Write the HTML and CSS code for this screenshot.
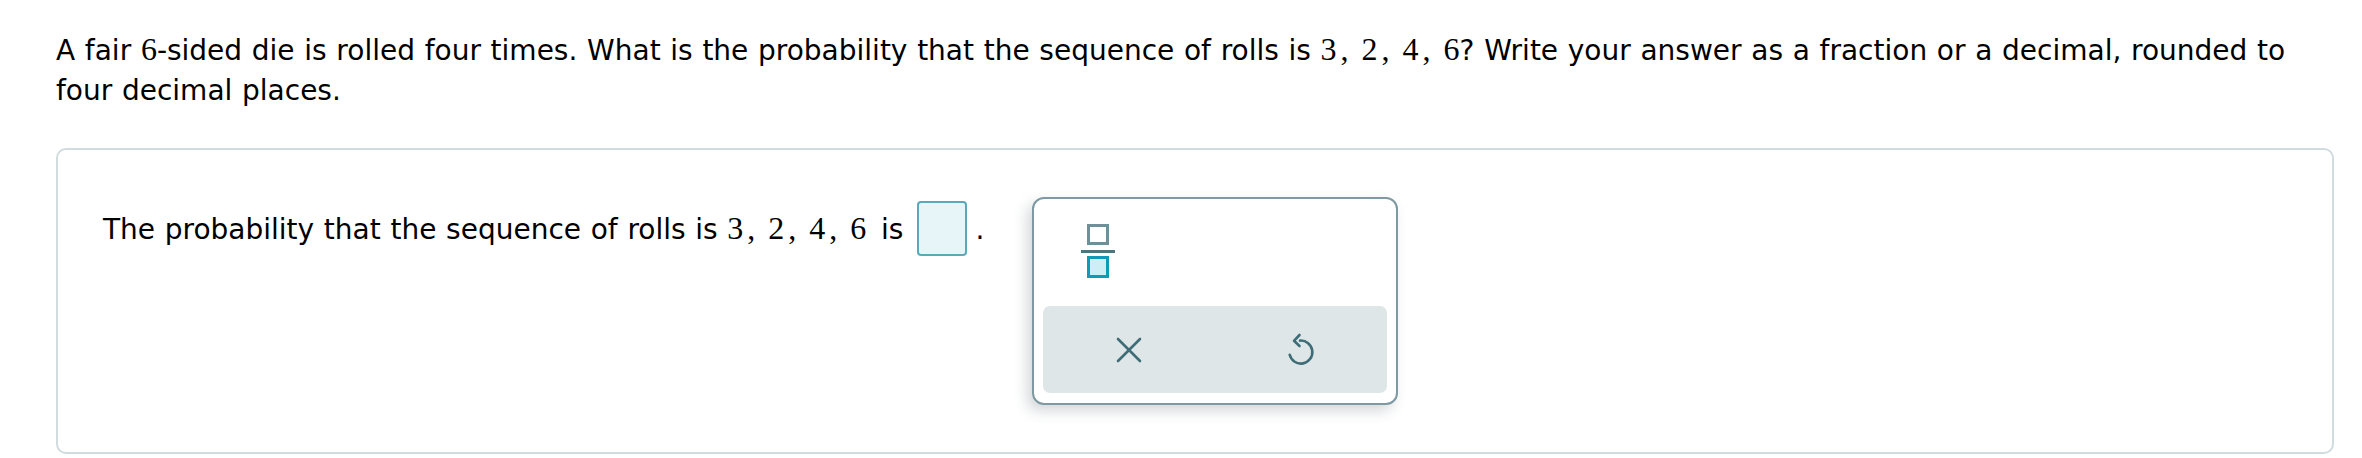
FILE: index.html
```html
<!DOCTYPE html>
<html lang="en">
<head>
<meta charset="utf-8">
<title>Probability question</title>
<link rel="stylesheet" href="styles.css">
</head>
<body>
<div class="page">
  <p class="question">A fair <span class="m">6</span>-sided die is rolled four times. What is the probability that the sequence of rolls is <span class="m seq"><span>3</span><span class="cm">,</span><span>2</span><span class="cm">,</span><span>4</span><span class="cm">,</span><span>6</span></span>? Write your answer as a fraction or a decimal, rounded to four decimal places.</p>
  <div class="card">
    <div class="statement">
      <span class="stext">The probability that the sequence of rolls is <span class="m seq inline-seq"><span>3</span><span class="cm">,</span><span>2</span><span class="cm">,</span><span>4</span><span class="cm">,</span><span>6</span></span> is</span>
      <span class="answer-box"></span>
      <span class="period">.</span>
    </div>
    <div class="keypad">
      <div class="keys">
        <button class="key" type="button" aria-label="fraction">
          <svg width="34" height="56" viewBox="0 0 34 56">
            <rect x="7.5" y="2.5" width="19" height="18" fill="#fff" stroke="#6f8f99" stroke-width="3"/>
            <rect x="0" y="27" width="34" height="3" fill="#4f7480"/>
            <rect x="7.5" y="34.5" width="19" height="19" fill="#cdeef5" stroke="#0f9bb6" stroke-width="3"/>
          </svg>
        </button>
      </div>
      <div class="actions">
        <button class="act" type="button" aria-label="clear">
          <svg width="26" height="26" viewBox="0 0 26 26">
            <path d="M2 2 L24 24 M24 2 L2 24" stroke="#3e6d78" stroke-width="2.6" stroke-linecap="round" fill="none"/>
          </svg>
        </button>
        <button class="act" type="button" aria-label="undo">
          <svg width="32" height="34" viewBox="0 0 32 34">
            <path d="M4.7 21.8 A11.5 11.5 0 1 0 15 7.6" stroke="#3e6d78" stroke-width="2.6" stroke-linecap="round" fill="none"/>
            <path d="M14.5 2 L9 7.8 L14.5 13" stroke="#3e6d78" stroke-width="2.6" stroke-linecap="round" stroke-linejoin="round" fill="none"/>
          </svg>
        </button>
      </div>
    </div>
  </div>
</div>
</body>
</html>
```

FILE: styles.css
```css
html, body {
  margin: 0;
  padding: 0;
  background: #ffffff;
}

body {
  font-family: "DejaVu Sans", Verdana, sans-serif;
  color: #000000;
  font-size: 28px;
  word-spacing: 0.8px;
}

.page {
  padding: 31px 28px 0 56px;
}

.question {
  margin: 0;
  line-height: 40px;
}

.m {
  font-family: "Liberation Serif", "DejaVu Serif", serif;
  font-size: 32px;
  line-height: 1;
  word-spacing: 0;
}

.seq .cm {
  margin: 0 13px 0 4px;
}

.inline-seq {
  margin-right: 5px;
}

.card {
  margin-top: 37px;
  height: 306px;
  box-sizing: border-box;
  border: 2px solid #d1dcdf;
  border-radius: 10px;
  padding: 47px 0 0 45px;
  display: flex;
  align-items: flex-start;
}

.statement {
  display: flex;
  align-items: center;
  height: 55px;
  margin-top: 3px;
  padding-top: 2px;
  line-height: 40px;
  white-space: nowrap;
}

.answer-box {
  width: 50px;
  height: 55px;
  box-sizing: border-box;
  border: 2px solid #5aa8b8;
  border-radius: 4px;
  background: #e7f4f8;
  margin-left: 14px;
  margin-top: -2px;
}

.period {
  margin-left: 8px;
}

.keypad {
  margin-left: 48px;
  width: 366px;
  height: 208px;
  box-sizing: border-box;
  border: 2px solid #7e99a1;
  border-radius: 12px;
  background: #ffffff;
  box-shadow: -5px 6px 14px rgba(40, 60, 70, 0.2);
  padding: 9px 9px 10px;
  display: flex;
  flex-direction: column;
}

.keys {
  display: flex;
  height: 86px;
}

.key {
  width: 110px;
  height: 86px;
  border: 0;
  padding: 0;
  background: transparent;
  display: flex;
  align-items: center;
  justify-content: center;
}

.actions {
  margin-top: 12px;
  flex: 1;
  background: #dfe6e8;
  border-radius: 7px;
  display: grid;
  grid-template-columns: 1fr 1fr;
}

.act {
  border: 0;
  padding: 0;
  background: transparent;
  display: flex;
  align-items: center;
  justify-content: center;
}
```
